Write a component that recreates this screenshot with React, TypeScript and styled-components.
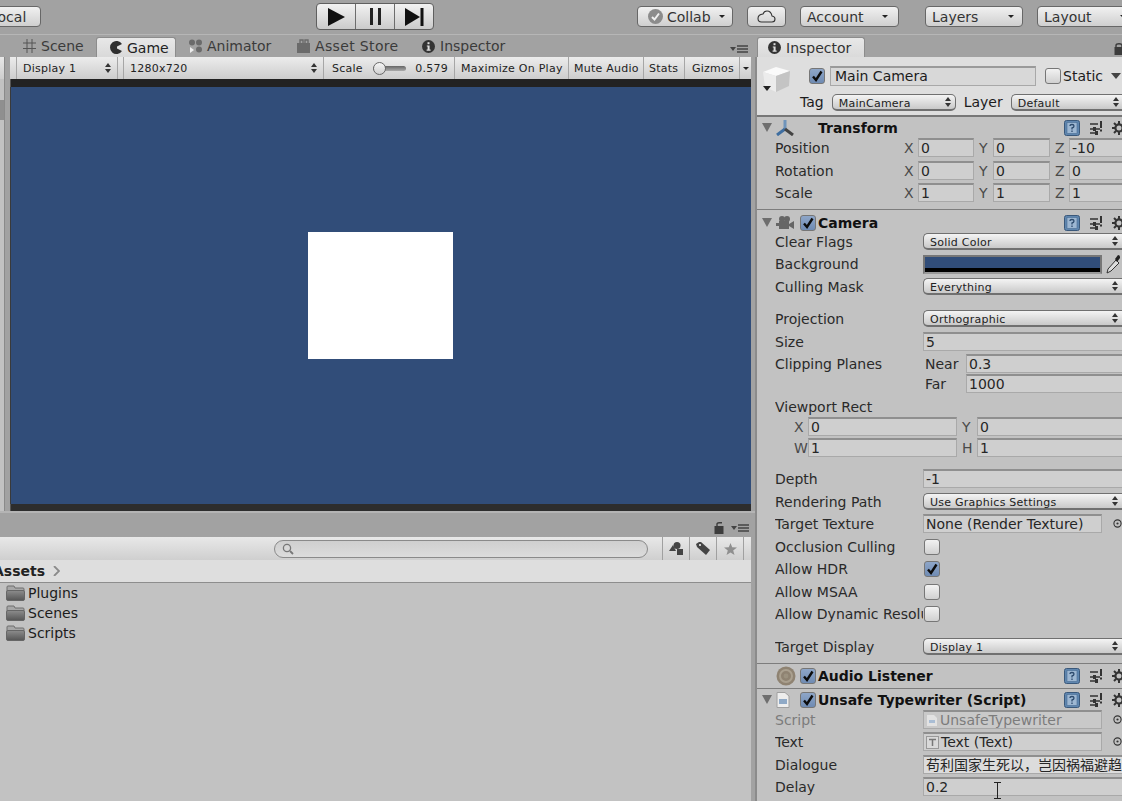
import styled, { createGlobalStyle } from "styled-components";
import type { ReactNode } from "react";

const GlobalStyle = createGlobalStyle`
  html, body { margin: 0; padding: 0; background: #a2a2a2; }
  * { box-sizing: border-box; }
`;

const Page = styled.div`
  width: 1122px;
  height: 801px;
  overflow: hidden;
  display: flex;
  flex-direction: column;
  background: #a2a2a2;
  color: #1c1c1c;
  font-family: "DejaVu Sans", "Noto Sans CJK SC", sans-serif;
  font-size: 14px;
  white-space: nowrap;
`;

/* top toolbar */
const Toolbar = styled.div`
  height: 35px;
  flex: none;
  display: flex;
  align-items: flex-start;
  border-bottom: 1px solid #b6b6b6;
`;
const ToolButton = styled.div<{ $w: number; $ml: number; $pl?: number }>`
  width: ${(p) => p.$w}px;
  margin-left: ${(p) => p.$ml}px;
  margin-top: 6px;
  height: 21px;
  padding: 0 6px 0 ${(p) => p.$pl ?? 6}px;
  flex: none;
  display: flex;
  align-items: center;
  gap: 4px;
  border: 1px solid #676767;
  border-radius: 4px;
  background: linear-gradient(#f1f1f1, #cfcfcf);
  color: #333;
  font-size: 14px;
`;
const PlayGroup = styled.div`
  width: 118px;
  height: 27px;
  margin: 3px 0 0 275px;
  flex: none;
  display: flex;
  border: 1px solid #5f5f5f;
  border-radius: 4px;
  background: linear-gradient(#f2f2f2, #cbcbcb);
`;
const PlayButton = styled.div`
  flex: 1;
  display: flex;
  align-items: center;
  justify-content: center;
  & + & { border-left: 1px solid #6d6d6d; }
`;
const Caret = styled.span<{ $ml?: number }>`
  width: 0;
  height: 0;
  margin-left: ${(p) => p.$ml ?? 0}px;
  border-left: 3px solid transparent;
  border-right: 3px solid transparent;
  border-top: 3px solid #222;
`;
const StaticCaret = styled.span`
  width: 0;
  height: 0;
  margin-left: 8px;
  border-left: 5px solid transparent;
  border-right: 5px solid transparent;
  border-top: 6px solid #444;
`;

/* layout */
const Main = styled.div`
  flex: 1;
  display: flex;
  min-height: 0;
`;
const LeftColumn = styled.div`
  width: 755px;
  flex: none;
  display: flex;
  flex-direction: column;
`;
const TabStrip = styled.div`
  height: 22px;
  flex: none;
  display: flex;
  align-items: flex-end;
  position: relative;
  color: #3d3d3d;
`;
const Tab = styled.div<{ $w: number; $ml: number; $active?: boolean; $wide?: boolean }>`
  width: ${(p) => p.$w}px;
  margin-left: ${(p) => p.$ml}px;
  height: ${(p) => (p.$active ? 20 : 22)}px;
  flex: none;
  display: flex;
  align-items: center;
  gap: 5px;
  padding-left: ${(p) => (p.$active ? 12 : 0)}px;
  color: ${(p) => (p.$active ? "#222" : "#3b3b3b")};
  letter-spacing: ${(p) => (p.$wide ? 0.35 : 0)}px;
  ${(p) =>
    p.$active &&
    `background: linear-gradient(#e8e8e8, #d9d9d9);
     border: 1px solid #8c8c8c;
     border-bottom: none;
     border-radius: 3px 3px 0 0;`}
`;
const PaneMenu = styled.div<{ $right: number; $top: number }>`
  position: absolute;
  right: ${(p) => p.$right}px;
  top: ${(p) => p.$top}px;
  display: flex;
  align-items: center;
  gap: 1px;
`;
const MenuGap = styled.span`
  width: 5px;
`;
const GameRow = styled.div`
  height: 454px;
  flex: none;
  display: flex;
`;
const Sliver = styled.div`
  width: 5px;
  flex: none;
  display: flex;
  flex-direction: column;
  background: #c2c2c2;
  border-right: 1px solid #8a8a8a;
`;
const SliverHead = styled.div`
  height: 22px;
  background: linear-gradient(#e8e8e8, #cdcdcd);
`;
const SliverPick = styled.div`
  height: 20px;
  margin-top: 21px;
  background: #8f8f8f;
`;
const GamePanel = styled.div`
  width: 741px;
  margin-left: 5px;
  flex: none;
  display: flex;
  flex-direction: column;
`;
const GameBar = styled.div`
  height: 22px;
  flex: none;
  display: flex;
  align-items: center;
  background: linear-gradient(#ececec, #cdcdcd);
  font-size: 11px;
  letter-spacing: 0.25px;
  color: #222;
`;
const BarCell = styled.div<{ $w: number; $pl?: number; $bare?: boolean }>`
  width: ${(p) => p.$w}px;
  height: 100%;
  flex: none;
  display: flex;
  align-items: center;
  justify-content: space-between;
  padding: 0 ${(p) => (p.$bare ? 0 : 6)}px 0 ${(p) => p.$pl ?? (p.$bare ? 0 : 6)}px;
  border-right: ${(p) => (p.$w === 11 ? "none" : "1px solid #a6a6a6")};
`;
const ScaleCell = styled(BarCell)`
  justify-content: flex-start;
`;
const Slider = styled.div`
  width: 37px;
  height: 5px;
  position: relative;
  border-radius: 3px;
  background: linear-gradient(#666, #aaa);
  margin: 0 9px 0 10px;
`;
const SliderThumb = styled.div`
  position: absolute;
  left: 0;
  top: -4px;
  width: 13px;
  height: 13px;
  border-radius: 50%;
  border: 1px solid #6a6a6a;
  background: linear-gradient(#f6f6f6, #cfcfcf);
`;
const Letterbox = styled.div<{ $h: number; $c: string }>`
  height: ${(p) => p.$h}px;
  flex: none;
  background: ${(p) => p.$c};
  border-left: 1px solid #555;
`;
const Viewport = styled.div`
  flex: 1;
  display: flex;
  align-items: center;
  justify-content: center;
  padding-right: 2px;
  background: #314d79;
  border-left: 1px solid #3a3a3a;
`;
const WhiteQuad = styled.div`
  width: 145px;
  height: 127px;
  background: #fff;
`;

/* project window */
const ProjectStrip = styled.div`
  height: 26px;
  flex: none;
  position: relative;
  border-top: 2px solid #b4b4b4;
`;
const ProjectPanel = styled.div`
  width: 751px;
  flex: 1;
  display: flex;
  flex-direction: column;
  background: #c2c2c2;
`;
const ProjectBar = styled.div`
  height: 23px;
  flex: none;
  display: flex;
  align-items: center;
  background: linear-gradient(#e8e8e8, #cfcfcf);
`;
const SearchBox = styled.div`
  width: 374px;
  height: 18px;
  margin-left: 274px;
  flex: none;
  display: flex;
  align-items: center;
  padding-left: 7px;
  border: 1px solid #8a8a8a;
  border-radius: 9px;
  background: linear-gradient(#cfcfcf, #dcdcdc);
`;
const BarIcon = styled.div<{ $ml?: number }>`
  width: 27px;
  height: 100%;
  margin-left: ${(p) => p.$ml ?? 0}px;
  flex: none;
  display: flex;
  align-items: center;
  justify-content: center;
  border-left: 1px solid #a0a0a0;
`;
const Breadcrumb = styled.div`
  height: 23px;
  flex: none;
  display: flex;
  align-items: center;
  gap: 8px;
  margin-left: -7px;
  padding-bottom: 1px;
  background: #dedede;
  border-bottom: 1px solid #8d8d8d;
  font-weight: bold;
  color: #222;
`;
const AssetList = styled.div`
  padding: 0 0 0 6px;
  display: flex;
  flex-direction: column;
`;
const AssetRow = styled.div`
  height: 20px;
  display: flex;
  align-items: center;
  gap: 3px;
`;

/* inspector */
const Inspector = styled.div`
  width: 380px;
  flex: none;
  display: flex;
  flex-direction: column;
  border-left: 2px solid #8b8b8b;
  background: #c2c2c2;
`;
const InspectorTabs = styled.div`
  height: 22px;
  flex: none;
  position: relative;
  display: flex;
  align-items: flex-end;
  background: #a2a2a2;
  margin-left: -2px;
`;
const InspectorTab = styled.div`
  width: 108px;
  height: 20px;
  margin-left: 2px;
  display: flex;
  align-items: center;
  gap: 5px;
  padding-left: 10px;
  background: linear-gradient(#e8e8e8, #dadada);
  border: 1px solid #8c8c8c;
  border-bottom: none;
  border-radius: 3px 3px 0 0;
  color: #333;
`;
const ObjectHeader = styled.div`
  height: 60px;
  flex: none;
  display: grid;
  grid-template-columns: 43px 1fr;
  background: #dedede;
  border-bottom: 2px solid #777;
  padding: 9px 0 0 5px;
`;
const ObjectMain = styled.div`
  display: flex;
  flex-direction: column;
  gap: 6px;
`;
const ObjectLine = styled.div<{ $pl?: number }>`
  height: 20px;
  margin-left: ${(p) => p.$pl ?? 0}px;
  display: flex;
  align-items: center;
`;
const NameField = styled.div`
  width: 206px;
  height: 20px;
  margin: 0 9px 0 5px;
  padding-left: 4px;
  line-height: 17px;
  background: #d8d8d8;
  border: 1px solid #a8a8a8;
  border-top: 2px solid #9a9a9a;
`;
const StaticLabel = styled.span`
  margin-left: 2px;
`;
const LayerLabel = styled.span`
  margin-left: 8px;
`;
const Section = styled.div<{ $h: number }>`
  height: ${(p) => p.$h}px;
  flex: none;
  border-bottom: 1px solid #7d7d7d;
`;
const SectionHead = styled.div<{ $h: number; $nofold?: boolean; $pt?: number }>`
  height: ${(p) => p.$h}px;
  display: flex;
  align-items: center;
  padding: ${(p) => p.$pt ?? 0}px 9px 0 ${(p) => (p.$nofold ? 19 : 5)}px;
`;
const Fold = styled.span`
  width: 0;
  height: 0;
  margin-right: 4px;
  border-left: 5px solid transparent;
  border-right: 5px solid transparent;
  border-top: 9px solid #6e6e6e;
`;
const IconSlot = styled.div<{ $w: number }>`
  width: ${(p) => p.$w}px;
  flex: none;
  display: flex;
  align-items: center;
`;
const Title = styled.div<{ $ml?: number }>`
  margin-left: ${(p) => p.$ml ?? 0}px;
  font-weight: bold;
  font-size: 14px;
  color: #111;
`;
const HeadTools = styled.div`
  margin-left: auto;
  display: flex;
  align-items: center;
  gap: 10px;
`;
const Row = styled.div<{ $mt?: number }>`
  height: 19px;
  margin-top: ${(p) => p.$mt ?? 0}px;
  padding-left: 18px;
  display: grid;
  grid-template-columns: 148px 1fr;
  align-items: center;
`;
const Label = styled.div<{ $dim?: boolean }>`
  overflow: hidden;
  color: ${(p) => (p.$dim ? "#7c7c7c" : "#2a2a2a")};
`;
const Field = styled.div<{ $w?: number; $dim?: boolean; $light?: boolean; $open?: boolean }>`
  height: 19px;
  width: ${(p) => (p.$w ? `${p.$w}px` : "auto")};
  flex: ${(p) => (p.$w ? "none" : "1")};
  position: relative;
  display: flex;
  align-items: center;
  gap: 2px;
  padding-left: 2px;
  line-height: 17px;
  background: ${(p) => (p.$light ? "#dcdcdc" : p.$dim ? "#c9c9c9" : "#cfcfcf")};
  border: 1px solid #a9a9a9;
  border-top: 2px solid #8f8f8f;
  color: ${(p) => (p.$dim ? "#7c7c7c" : "#262626")};
  overflow: ${(p) => (p.$open ? "visible" : "hidden")};
`;
const Dropdown = styled.div`
  width: 199px;
  height: 17px;
  display: flex;
  align-items: center;
  justify-content: space-between;
  padding: 0 4px 0 6px;
  border: 1px solid #707070;
  border-bottom-width: 2px;
  border-right: none;
  border-radius: 5px 0 0 5px;
  background: linear-gradient(#f4f4f4, #c9c9c9);
  font-size: 11px;
  letter-spacing: 0.25px;
  color: #222;
`;
const DropText = styled.span`
  padding-top: 3px;
`;
const SmallDropdown = styled(Dropdown)<{ $w: number; $ml: number; $open?: boolean }>`
  width: ${(p) => p.$w}px;
  margin-left: ${(p) => p.$ml}px;
  flex: none;
  border-right: ${(p) => (p.$open ? "none" : "1px solid #707070")};
  border-radius: ${(p) => (p.$open ? "5px 0 0 5px" : "5px")};
`;
const ValueLine = styled.div`
  display: flex;
  align-items: center;
`;
const CheckLine = styled(ValueLine)`
  padding-left: 1px;
`;
const TrailIcon = styled.div<{ $ml: number }>`
  margin-left: ${(p) => p.$ml}px;
  flex: none;
  display: flex;
  align-items: center;
`;
const SwatchFrame = styled.div`
  width: 179px;
  height: 19px;
  flex: none;
  display: flex;
  flex-direction: column;
  border: 2px solid #777;
  border-bottom-color: #999;
  background: #314d79;
`;
const SwatchAlpha = styled.div`
  height: 4px;
  margin-top: auto;
  background: #000;
`;
const VectorRow = styled.div<{ $mt?: number }>`
  height: 19px;
  margin-top: ${(p) => p.$mt ?? 0}px;
  padding-left: 18px;
  display: flex;
  align-items: center;
`;
const VectorLabel = styled.div<{ $w: number }>`
  width: ${(p) => p.$w}px;
  flex: none;
  color: #2a2a2a;
`;
const Axis = styled.div<{ $w?: number; $ml?: number }>`
  width: ${(p) => p.$w ?? 14}px;
  margin-left: ${(p) => p.$ml ?? 0}px;
  flex: none;
  color: #4a4a4a;
`;
const SubLabel = styled.div`
  width: 43px;
  flex: none;
  padding-left: 2px;
  color: #2a2a2a;
`;
const CheckBoxBox = styled.div<{ $on?: boolean }>`
  width: 16px;
  height: 16px;
  flex: none;
  display: flex;
  align-items: center;
  justify-content: center;
  border: 1px solid #767676;
  border-radius: 3px;
  background: ${(p) =>
    p.$on ? "linear-gradient(#8ea6c8, #6f8bb3)" : "linear-gradient(#f2f2f2, #d0d0d0)"};
`;
const TextCursor = styled.div`
  position: absolute;
  left: 69px;
  top: 3px;
`;

/* icons */
const CheckBox = ({ on }: { on?: boolean }) => (
  <CheckBoxBox $on={on}>
    {on && (
      <svg width="14" height="14" viewBox="0 0 14 14">
        <path d="M3 7.5 L6 11 L11.5 2.5" fill="none" stroke="#0c0c0c" strokeWidth="2.4" />
      </svg>
    )}
  </CheckBoxBox>
);

const Updown = () => (
  <svg width="6" height="10" viewBox="0 0 6 10">
    <path d="M3 0 L6 4 H0 Z M3 10 L0 6 H6 Z" fill="#333" />
  </svg>
);

const Info = ({ c = "#333" }: { c?: string }) => (
  <svg width="13" height="13" viewBox="0 0 13 13">
    <circle cx="6.5" cy="6.5" r="6.5" fill={c} />
    <rect x="5.5" y="2.2" width="2" height="2" fill="#ddd" />
    <path d="M4.8 5.4 H7.6 V9.6 H8.6 V10.8 H4.6 V9.6 H5.6 V6.6 H4.8 Z" fill="#ddd" />
  </svg>
);

const Lock = ({ open }: { open?: boolean }) => (
  <svg width="10" height="12" viewBox="0 0 10 12">
    <rect x="0.5" y="4" width="9" height="8" fill="#3c3c3c" />
    <path d={open ? "M3 4 V2 Q3 0.7 5 0.7 H8" : "M2 4 V2.5 Q2 0.7 5 0.7 Q8 0.7 8 2.5 V4"} fill="none" stroke="#3c3c3c" strokeWidth="1.4" />
  </svg>
);

const PaneOptions = () => (
  <>
    <svg width="6" height="4" viewBox="0 0 6 4">
      <path d="M0 0 H6 L3 4 Z" fill="#444" />
    </svg>
    <svg width="11" height="8" viewBox="0 0 11 8">
      <path d="M0 1 H11 M0 4 H11 M0 7 H11" stroke="#444" strokeWidth="1.3" />
    </svg>
  </>
);

const Help = () => (
  <svg width="16" height="16" viewBox="0 0 16 16">
    <rect x="0.5" y="0.5" width="15" height="15" rx="2" fill="#5f86af" stroke="#3a587a" />
    <rect x="3" y="2.5" width="10" height="11" fill="#9db7d2" stroke="#4a6d93" strokeWidth="0.6" />
    <path d="M6 6 Q6 4.5 8 4.5 Q10 4.5 10 6 Q10 7.5 8 8 V9.5 M8 10.5 V12" fill="none" stroke="#2e4b6e" strokeWidth="1.3" />
  </svg>
);

const Presets = () => (
  <svg width="12" height="14" viewBox="0 0 12 14">
    <path d="M0 3 H8 M0 8 H10 M0 12 H8" stroke="#333" strokeWidth="1.5" />
    <rect x="3" y="6" width="3" height="4" fill="#333" />
    <rect x="5" y="10" width="3" height="4" fill="#333" />
    <rect x="10" y="0" width="2" height="7" fill="#333" />
    <rect x="10" y="8.5" width="2" height="2" fill="#333" />
  </svg>
);

const Gear = () => (
  <svg width="14" height="14" viewBox="0 0 14 14">
    <circle cx="7" cy="7" r="3.6" fill="none" stroke="#333" strokeWidth="2.2" />
    <path d="M7 0 V3 M7 11 V14 M0 7 H3 M11 7 H14 M2 2 L4 4 M10 10 L12 12 M12 2 L10 4 M2 12 L4 10" stroke="#333" strokeWidth="2" />
  </svg>
);

const Tools = () => (
  <HeadTools>
    <Help />
    <Presets />
    <Gear />
  </HeadTools>
);

const Folder = () => (
  <svg width="19" height="16" viewBox="0 0 19 16">
    <defs>
      <linearGradient id="fold" x1="0" y1="0" x2="0" y2="1">
        <stop offset="0" stopColor="#8d8d8d" />
        <stop offset="1" stopColor="#555" />
      </linearGradient>
    </defs>
    <path d="M1 2 Q1 1 2 1 H8 L9 3 H17 Q18 3 18 4 V6 H1 Z" fill="#a7a7a7" stroke="#6f6f6f" />
    <rect x="0.5" y="5.5" width="18" height="10" rx="1.5" fill="url(#fold)" stroke="#666" />
  </svg>
);

const Target = () => (
  <svg width="9" height="9" viewBox="0 0 9 9">
    <circle cx="4.5" cy="4.5" r="3.6" fill="none" stroke="#333" strokeWidth="1.1" />
    <circle cx="4.5" cy="4.5" r="1.1" fill="#333" />
  </svg>
);

const Dropper = () => (
  <svg width="15" height="20" viewBox="0 0 15 20">
    <path d="M1 19 L2 15 L10 6 L13 9 L5 17 Z" fill="#ddd" stroke="#333" />
    <path d="M9 5 L12 1 Q14 1 14 3 L14 4 L11 8 Z" fill="#222" />
  </svg>
);

const ScriptIcon = () => (
  <svg width="14" height="16" viewBox="0 0 14 16">
    <path d="M1 0.5 H9 L13 4 V15.5 H1 Z" fill="#ededed" stroke="#a0a0a0" />
    <rect x="3" y="7" width="8" height="5" fill="#8fa9c6" />
  </svg>
);

const Vec = ({ label, x, y, z, mt }: { label: string; x: string; y: string; z: string; mt?: number }) => (
  <VectorRow $mt={mt}>
    <VectorLabel $w={129}>{label}</VectorLabel>
    <Axis>X</Axis>
    <Field $w={56}>{x}</Field>
    <Axis $ml={5}>Y</Axis>
    <Field $w={57}>{y}</Field>
    <Axis $ml={5} $w={14}>Z</Axis>
    <Field>{z}</Field>
  </VectorRow>
);

const Drop = ({ children }: { children: ReactNode }) => (
  <Dropdown>
    <DropText>{children}</DropText>
    <Updown />
  </Dropdown>
);

const CheckRow = ({ label, on, mt }: { label: string; on?: boolean; mt: number }) => (
  <Row $mt={mt}>
    <Label>{label}</Label>
    <CheckLine>
      <CheckBox on={on} />
    </CheckLine>
  </Row>
);

export default function App() {
  return (
    <Page>
      <GlobalStyle />
      <Toolbar>
        <ToolButton $w={61} $ml={-20} $pl={9}>
          Local
        </ToolButton>
        <PlayGroup>
          <PlayButton>
            <svg width="18" height="18" viewBox="0 0 18 18">
              <path d="M1 0 L18 9 L1 18 Z" fill="#111" />
            </svg>
          </PlayButton>
          <PlayButton>
            <svg width="13" height="17" viewBox="0 0 13 17">
              <path d="M1 0 H4 V17 H1 Z M9 0 H12 V17 H9 Z" fill="#222" />
            </svg>
          </PlayButton>
          <PlayButton>
            <svg width="19" height="18" viewBox="0 0 19 18">
              <path d="M0 0 L15 9 L0 18 Z" fill="#111" />
              <rect x="15.5" y="0" width="3" height="18" fill="#111" />
            </svg>
          </PlayButton>
        </PlayGroup>
        <ToolButton $w={96} $ml={203} $pl={10}>
          <svg width="15" height="15" viewBox="0 0 15 15">
            <circle cx="7.5" cy="7.5" r="7.5" fill="#8c8c8c" />
            <path d="M4 8 L6.5 10.5 L11 4.5" fill="none" stroke="#f0f0f0" strokeWidth="2" />
          </svg>
          <span>Collab</span>
          <Caret $ml={4} />
        </ToolButton>
        <ToolButton $w={39} $ml={14} $pl={9}>
          <svg width="19" height="13" viewBox="0 0 19 13">
            <path d="M4.5 12 H15 Q18 12 18 9 Q18 6.5 15 6 Q14 1 10 1 Q7 1 6 4 Q1 4.5 1 8.5 Q1 12 4.5 12 Z" fill="none" stroke="#333" strokeWidth="1.1" />
          </svg>
        </ToolButton>
        <ToolButton $w={99} $ml={14}>
          <span>Account</span>
          <Caret $ml={14} />
        </ToolButton>
        <ToolButton $w={98} $ml={26}>
          <span>Layers</span>
          <Caret $ml={26} />
        </ToolButton>
        <ToolButton $w={100} $ml={14}>
          <span>Layout</span>
          <Caret $ml={24} />
        </ToolButton>
      </Toolbar>

      <Main>
        <LeftColumn>
          <TabStrip>
            <Tab $w={73} $ml={23}>
              <svg width="13" height="14" viewBox="0 0 13 14">
                <path d="M4 0 V14 M9 0 V14 M0 4 H13 M0 9.5 H13" stroke="#555" strokeWidth="1" />
              </svg>
              Scene
            </Tab>
            <Tab $w={80} $ml={0} $active>
              <svg width="13" height="13" viewBox="0 0 13 13">
                <path d="M13 3 A6.5 6.5 0 1 0 13 10 L8 7.5 L8 5.5 Z" fill="#2f2f2f" />
              </svg>
              Game
            </Tab>
            <Tab $w={108} $ml={13}>
              <svg width="13" height="14" viewBox="0 0 13 14">
                <circle cx="3" cy="3.5" r="3" fill="#6b6b6b" />
                <circle cx="10" cy="3.5" r="3" fill="#6b6b6b" />
                <circle cx="10" cy="10.5" r="3" fill="#6b6b6b" />
                <path d="M1 8 L5 11 L1 14 Z" fill="#eee" />
              </svg>
              Animator
            </Tab>
            <Tab $w={125} $ml={0} $wide>
              <svg width="13" height="14" viewBox="0 0 13 14">
                <path d="M0 4 H13 V14 H0 Z" fill="#6b6b6b" />
                <path d="M3 4 V1 H6 V4 M8 4 V1 H11 V4" fill="none" stroke="#6b6b6b" strokeWidth="1.4" />
              </svg>
              Asset Store
            </Tab>
            <Tab $w={90} $ml={0}>
              <Info />
              Inspector
            </Tab>
            <PaneMenu $right={7} $top={10}>
              <PaneOptions />
            </PaneMenu>
          </TabStrip>
          <GameRow>
            <Sliver>
              <SliverHead />
              <SliverPick />
            </Sliver>
            <GamePanel>
              <GameBar>
                <BarCell $w={7} $bare />
                <BarCell $w={101}>
                  <span>Display 1</span>
                  <Updown />
                </BarCell>
                <BarCell $w={6} $bare />
                <BarCell $w={200}>
                  <span>1280x720</span>
                  <Updown />
                </BarCell>
                <ScaleCell $w={131} $pl={8}>
                  <span>Scale</span>
                  <Slider>
                    <SliderThumb />
                  </Slider>
                  <span>0.579</span>
                </ScaleCell>
                <BarCell $w={114}>Maximize On Play</BarCell>
                <BarCell $w={75} $pl={5}>Mute Audio</BarCell>
                <BarCell $w={41} $pl={5}>Stats</BarCell>
                <BarCell $w={55} $pl={7}>Gizmos</BarCell>
                <BarCell $w={11} $pl={3}>
                  <Caret />
                </BarCell>
              </GameBar>
              <Letterbox $h={8} $c="#222" />
              <Viewport>
                <WhiteQuad />
              </Viewport>
              <Letterbox $h={7} $c="#2d2d2d" />
            </GamePanel>
          </GameRow>
          <ProjectStrip>
            <PaneMenu $right={6} $top={9}>
              <Lock open />
              <MenuGap />
              <PaneOptions />
            </PaneMenu>
          </ProjectStrip>
          <ProjectPanel>
            <ProjectBar>
              <SearchBox>
                <svg width="12" height="12" viewBox="0 0 12 12">
                  <circle cx="5" cy="5" r="3.6" fill="#d8d8d8" stroke="#777" strokeWidth="1.3" />
                  <path d="M8 8 L11 11" stroke="#777" strokeWidth="1.8" />
                </svg>
              </SearchBox>
              <BarIcon $ml={14}>
                <svg width="14" height="13" viewBox="0 0 14 13">
                  <circle cx="8" cy="3.5" r="3.5" fill="#444" />
                  <path d="M0 9 L4 3 L7 9 Z" fill="#444" />
                  <rect x="8" y="7" width="6" height="6" fill="#444" />
                </svg>
              </BarIcon>
              <BarIcon>
                <svg width="14" height="13" viewBox="0 0 14 13">
                  <path d="M0 2 L3 0 H5 L14 8 L10 13 L1 5 Z" fill="#444" />
                  <rect x="3" y="2" width="2" height="2" fill="#ccc" />
                </svg>
              </BarIcon>
              <BarIcon>
                <svg width="13" height="12" viewBox="0 0 13 12">
                  <path d="M6.5 0 L8.2 4.3 L13 4.6 L9.2 7.5 L10.5 12 L6.5 9.4 L2.5 12 L3.8 7.5 L0 4.6 L4.8 4.3 Z" fill="#8f8f8f" />
                </svg>
              </BarIcon>
              <BarIcon />
            </ProjectBar>
            <Breadcrumb>
              <span>Assets</span>
              <svg width="7" height="10" viewBox="0 0 7 10">
                <path d="M1 0 L6 5 L1 10" fill="none" stroke="#8a8a8a" strokeWidth="1.8" />
              </svg>
            </Breadcrumb>
            <AssetList>
              <AssetRow><Folder />Plugins</AssetRow>
              <AssetRow><Folder />Scenes</AssetRow>
              <AssetRow><Folder />Scripts</AssetRow>
            </AssetList>
          </ProjectPanel>
        </LeftColumn>

        <Inspector>
          <InspectorTabs>
            <InspectorTab>
              <Info />
              Inspector
            </InspectorTab>
            <PaneMenu $right={11} $top={8}>
              <Lock />
            </PaneMenu>
          </InspectorTabs>
          <ObjectHeader>
            <svg width="30" height="28" viewBox="0 0 30 28">
              <path d="M1 6 L14 1 L28 5 L14 10 Z" fill="#fafafa" />
              <path d="M1 6 L14 10 L14 26 L3 21 Z" fill="#ececec" />
              <path d="M14 10 L28 5 L27 20 L14 26 Z" fill="#c4c4c4" />
              <path d="M1 20 H9 L5 25 Z" fill="#222" />
            </svg>
            <ObjectMain>
              <ObjectLine $pl={4}>
                <CheckBox on />
                <NameField>Main Camera</NameField>
                <CheckBox />
                <StaticLabel>Static</StaticLabel>
                <StaticCaret />
              </ObjectLine>
              <ObjectLine $pl={-5}>
                <span>Tag</span>
                <SmallDropdown $w={124} $ml={8}>
                  <DropText>MainCamera</DropText>
                  <Updown />
                </SmallDropdown>
                <LayerLabel>Layer</LayerLabel>
                <SmallDropdown $w={112} $ml={8} $open>
                  <DropText>Default</DropText>
                  <Updown />
                </SmallDropdown>
              </ObjectLine>
            </ObjectMain>
          </ObjectHeader>

          <Section $h={93}>
            <SectionHead $h={21}>
              <Fold />
              <IconSlot $w={42}>
                <svg width="18" height="16" viewBox="0 0 18 16">
                  <path d="M9 0 V9" stroke="#6f94bb" strokeWidth="3" />
                  <path d="M9 9 L1 15" stroke="#3f6ea0" strokeWidth="3" />
                  <path d="M9 9 L17 15" stroke="#444" strokeWidth="3" />
                </svg>
              </IconSlot>
              <Title>Transform</Title>
              <Tools />
            </SectionHead>
            <Vec label="Position" x="0" y="0" z="-10" />
            <Vec label="Rotation" x="0" y="0" z="0" mt={4} />
            <Vec label="Scale" x="1" y="1" z="1" mt={3} />
          </Section>

          <Section $h={454}>
            <SectionHead $h={22} $pt={3}>
              <Fold />
              <IconSlot $w={24}>
                <svg width="18" height="14" viewBox="0 0 18 14">
                  <circle cx="6" cy="3" r="3" fill="#666" />
                  <circle cx="11" cy="3" r="3" fill="#666" />
                  <rect x="3" y="5" width="10" height="8" fill="#666" />
                  <path d="M13 8 L18 5 V13 L13 10 Z M0 7 H3 V10 H0 Z" fill="#666" />
                </svg>
              </IconSlot>
              <CheckBox on />
              <Title $ml={2}>Camera</Title>
              <Tools />
            </SectionHead>
            <Row>
              <Label>Clear Flags</Label>
              <Drop>Solid Color</Drop>
            </Row>
            <Row $mt={3}>
              <Label>Background</Label>
              <ValueLine>
                <SwatchFrame>
                  <SwatchAlpha />
                </SwatchFrame>
                <TrailIcon $ml={4}>
                  <Dropper />
                </TrailIcon>
              </ValueLine>
            </Row>
            <Row $mt={4}>
              <Label>Culling Mask</Label>
              <Drop>Everything</Drop>
            </Row>
            <Row $mt={13}>
              <Label>Projection</Label>
              <Drop>Orthographic</Drop>
            </Row>
            <Row $mt={4}>
              <Label>Size</Label>
              <Field>5</Field>
            </Row>
            <Row $mt={3}>
              <Label>Clipping Planes</Label>
              <ValueLine>
                <SubLabel>Near</SubLabel>
                <Field>0.3</Field>
              </ValueLine>
            </Row>
            <Row $mt={1}>
              <Label />
              <ValueLine>
                <SubLabel>Far</SubLabel>
                <Field>1000</Field>
              </ValueLine>
            </Row>
            <Row $mt={4}>
              <Label>Viewport Rect</Label>
            </Row>
            <VectorRow $mt={1}>
              <VectorLabel $w={19} />
              <Axis>X</Axis>
              <Field $w={149}>0</Field>
              <Axis $ml={5} $w={15}>Y</Axis>
              <Field>0</Field>
            </VectorRow>
            <VectorRow $mt={2}>
              <VectorLabel $w={19} />
              <Axis>W</Axis>
              <Field $w={149}>1</Field>
              <Axis $ml={5} $w={15}>H</Axis>
              <Field>1</Field>
            </VectorRow>
            <Row $mt={12}>
              <Label>Depth</Label>
              <Field>-1</Field>
            </Row>
            <Row $mt={4}>
              <Label>Rendering Path</Label>
              <Drop>Use Graphics Settings</Drop>
            </Row>
            <Row $mt={3}>
              <Label>Target Texture</Label>
              <ValueLine>
                <Field $w={179}>None (Render Texture)</Field>
                <TrailIcon $ml={11}>
                  <Target />
                </TrailIcon>
              </ValueLine>
            </Row>
            <CheckRow label="Occlusion Culling" mt={4} />
            <CheckRow label="Allow HDR" on mt={3} />
            <CheckRow label="Allow MSAA" mt={4} />
            <CheckRow label="Allow Dynamic Resolution" mt={3} />
            <Row $mt={14}>
              <Label>Target Display</Label>
              <Drop>Display 1</Drop>
            </Row>
          </Section>

          <Section $h={25}>
            <SectionHead $h={24} $nofold>
              <IconSlot $w={24}>
                <svg width="20" height="20" viewBox="0 0 20 20">
                  <circle cx="10" cy="10" r="9.5" fill="#8f8372" />
                  <circle cx="10" cy="10" r="6" fill="none" stroke="#aaa08f" strokeWidth="2" />
                  <circle cx="10" cy="10" r="2.4" fill="#9b917f" />
                </svg>
              </IconSlot>
              <CheckBox on />
              <Title $ml={2}>Audio Listener</Title>
              <Tools />
            </SectionHead>
          </Section>

          <Section $h={120}>
            <SectionHead $h={21}>
              <Fold />
              <IconSlot $w={24}>
                <ScriptIcon />
              </IconSlot>
              <CheckBox on />
              <Title $ml={2}>Unsafe Typewriter (Script)</Title>
              <Tools />
            </SectionHead>
            <Row>
              <Label $dim>Script</Label>
              <ValueLine>
                <Field $w={179} $dim>
                  <svg width="12" height="13" viewBox="0 0 12 13">
                    <path d="M1 1 H8 L11 4 V12 H1 Z" fill="#e2e2e2" />
                    <rect x="3" y="6" width="6" height="3" fill="#a9bdd4" />
                  </svg>
                  UnsafeTypewriter
                </Field>
                <TrailIcon $ml={11}>
                  <Target />
                </TrailIcon>
              </ValueLine>
            </Row>
            <Row $mt={3}>
              <Label>Text</Label>
              <ValueLine>
                <Field $w={179}>
                  <svg width="13" height="13" viewBox="0 0 13 13">
                    <rect x="0.5" y="0.5" width="12" height="12" fill="#d9d9d9" stroke="#999" />
                    <path d="M3 3.5 H10 M6.5 3.5 V10" stroke="#777" strokeWidth="1.5" />
                  </svg>
                  Text (Text)
                </Field>
                <TrailIcon $ml={11}>
                  <Target />
                </TrailIcon>
              </ValueLine>
            </Row>
            <Row $mt={4}>
              <Label>Dialogue</Label>
              <Field $light>苟利国家生死以，岂因祸福避趋吉</Field>
            </Row>
            <Row $mt={3}>
              <Label>Delay</Label>
              <Field $open>
                0.2
                <TextCursor>
                  <svg width="9" height="17" viewBox="0 0 9 17">
                    <path d="M1 0.5 H8 M4.5 0.5 V16.5 M1 16.5 H8" fill="none" stroke="#222" strokeWidth="1" />
                  </svg>
                </TextCursor>
              </Field>
            </Row>
          </Section>
        </Inspector>
      </Main>
    </Page>
  );
}
